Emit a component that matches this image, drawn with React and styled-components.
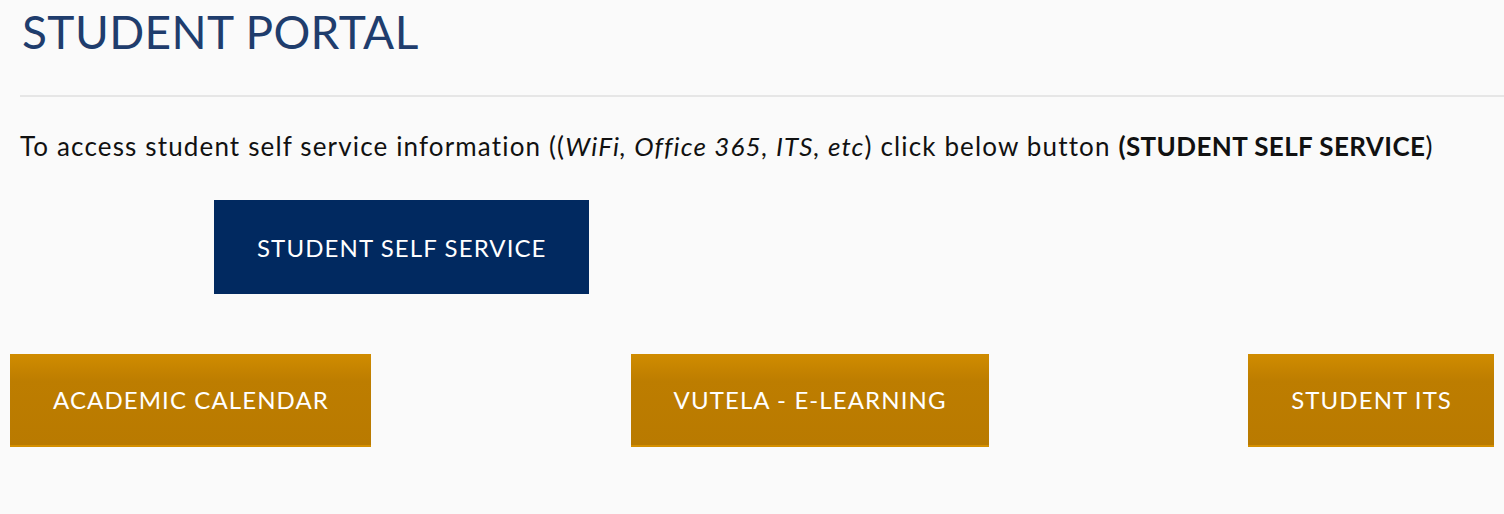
import styled, { createGlobalStyle } from "styled-components";

const GlobalStyle = createGlobalStyle`
  html, body {
    margin: 0;
    padding: 0;
    background: #fafafa;
  }
  body {
    font-family: Lato, "Open Sans", sans-serif;
    color: #111;
  }
`;

const Page = styled.div`
  width: 1504px;
  height: 514px;
  padding-top: 4px;
  box-sizing: border-box;
`;

const Title = styled.h1`
  margin: 0 0 0 22px;
  font-size: 46px;
  font-weight: 400;
  letter-spacing: 0.4px;
  color: #1f3d6d;
  line-height: 56px;
`;

const Divider = styled.hr`
  margin: 35px 0 0 20px;
  border: 0;
  height: 2px;
  background: #e6e6e6;
`;

const Intro = styled.p`
  margin: 34px 0 0 20px;
  font-size: 26px;
  line-height: 30px;
  letter-spacing: 1.15px;
`;

const Bold = styled.b`
  font-weight: 700;
  letter-spacing: 0.4px;
`;

const SelfServiceRow = styled.div`
  margin-top: 39px;
  padding-left: 214px;
  display: flex;
`;

const Button = styled.a`
  display: flex;
  align-items: center;
  justify-content: center;
  height: ${(p) => (p.$navy ? "94px" : "93px")};
  padding: 0 42px 0 43px;
  box-sizing: border-box;
  color: #fff;
  font-size: 24px;
  letter-spacing: 1.1px;
  text-decoration: none;
  text-transform: uppercase;
  background: ${(p) =>
    p.$navy ? "#012960" : "linear-gradient(#d08c00 0%, #bd7d00 30%, #b97a00 100%)"};
  border-bottom: ${(p) => (p.$navy ? "none" : "2px solid #d48f00")};
`;

const LinkRow = styled.div`
  margin: 60px 10px 0 10px;
  display: flex;
  justify-content: space-between;
`;

export default function App() {
  return (
    <Page>
      <GlobalStyle />
      <Title>STUDENT PORTAL</Title>
      <Divider />
      <Intro>
        To access student self service information ((<i>WiFi, Office 365, ITS, etc</i>)
        click below button <Bold>(STUDENT SELF SERVICE</Bold>)
      </Intro>
      <SelfServiceRow>
        <Button $navy href="#">Student Self Service</Button>
      </SelfServiceRow>
      <LinkRow>
        <Button href="#">Academic Calendar</Button>
        <Button href="#">Vutela - E-Learning</Button>
        <Button href="#">Student ITS</Button>
      </LinkRow>
    </Page>
  );
}
